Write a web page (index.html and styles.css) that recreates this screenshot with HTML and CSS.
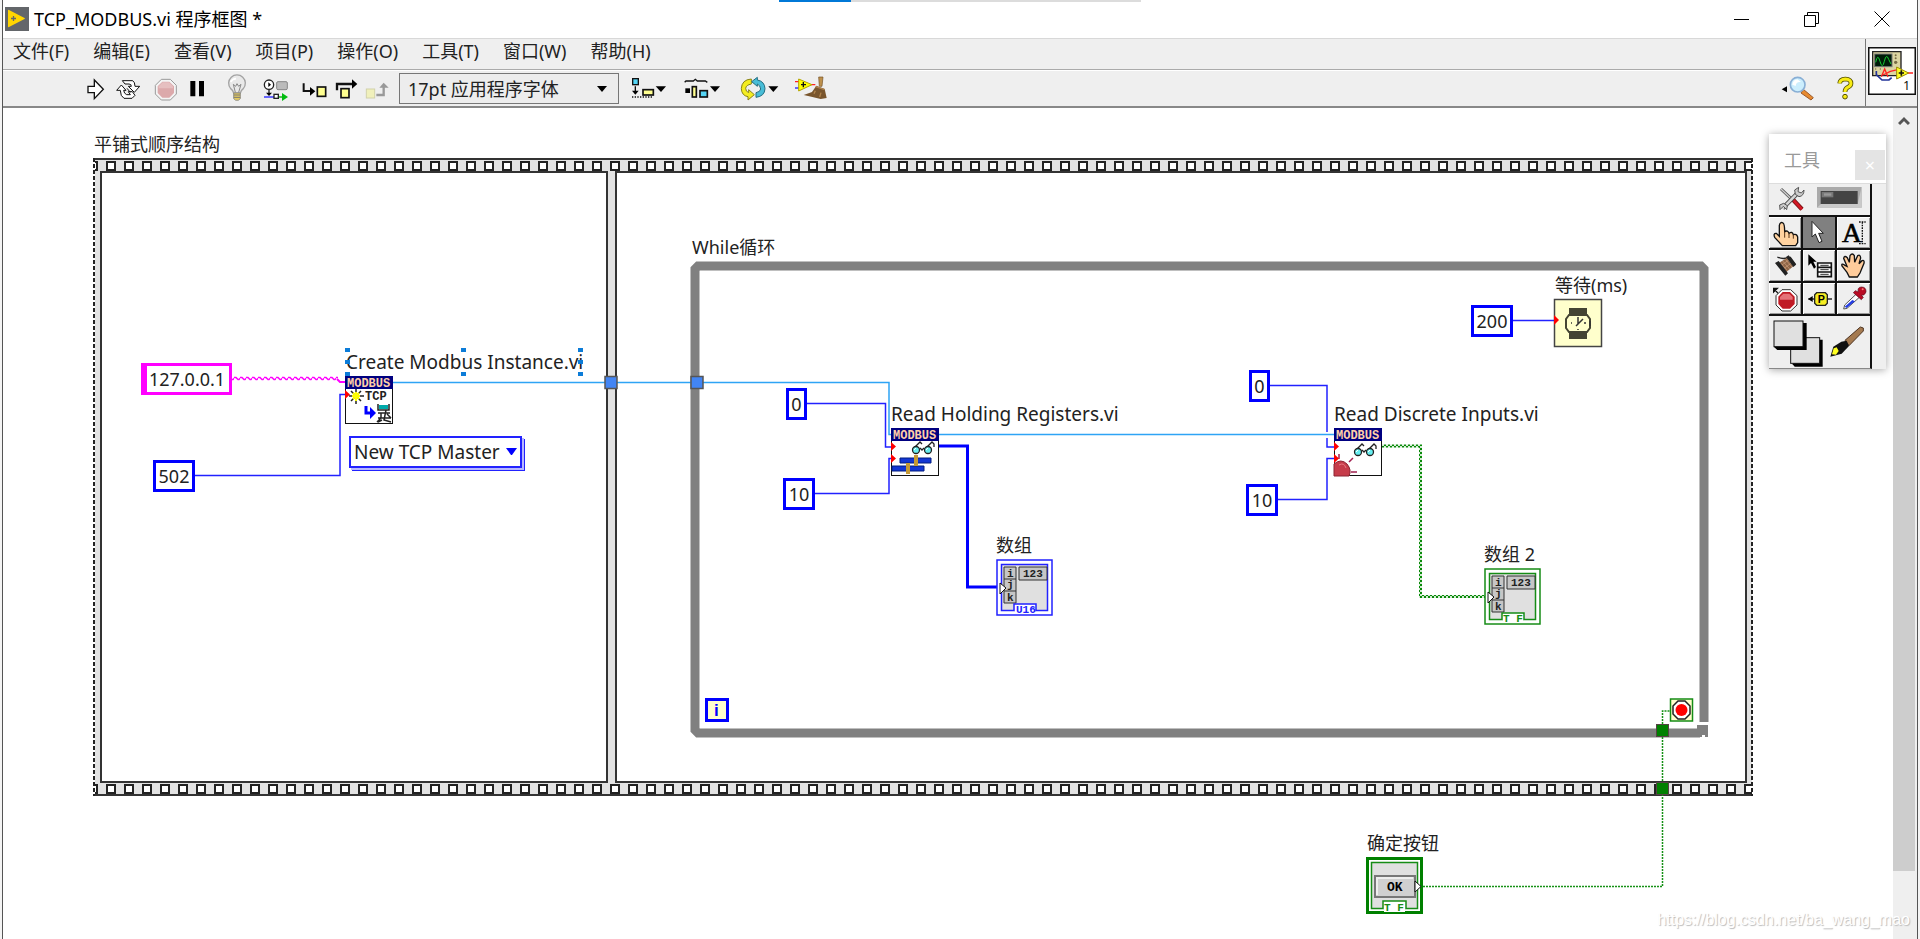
FILE: index.html
```html
<!DOCTYPE html>
<html lang="zh-CN">
<head>
<meta charset="utf-8">
<title>TCP_MODBUS.vi 程序框图 *</title>
<link rel="stylesheet" href="styles.css">
</head>
<body>
<div class="progress"><div class="progress-done"></div></div>
<div class="window">
  <header class="titlebar">
    <svg class="app-icon" viewBox="0 0 24 24"><rect width="24" height="24" fill="#63666a"/><path d="M3 3.500Q3 2.500 4 3L19.500 11Q20.500 11.500 19.500 12L4 20Q3 20.500 3 19.500Z" fill="#ffd500"/><path d="M6 11.500H11M8.500 9V14" stroke="#63666a" stroke-width="1.300"/></svg>
    <h1 class="title">TCP_MODBUS.vi 程序框图 *</h1>
    <div class="window-controls">
      <button class="winbtn" aria-label="最小化"><svg viewBox="0 0 16 16"><path d="M0 8.500H15"/></svg></button>
      <button class="winbtn" aria-label="还原"><svg viewBox="0 0 16 16"><path d="M.500 4.500H11.500V15.500H.500ZM3.500 4V1.500H14.500V12.500H12"/></svg></button>
      <button class="winbtn" aria-label="关闭"><svg viewBox="0 0 16 16"><path d="M.500 .500L15.500 15.500M15.500 .500L.500 15.500"/></svg></button>
    </div>
  </header>

  <div class="command-area">
    <div class="bars">
      <nav class="menubar">
        <button class="menu">文件(F)</button>
        <button class="menu">编辑(E)</button>
        <button class="menu">查看(V)</button>
        <button class="menu">项目(P)</button>
        <button class="menu">操作(O)</button>
        <button class="menu">工具(T)</button>
        <button class="menu">窗口(W)</button>
        <button class="menu">帮助(H)</button>
      </nav>
      <div class="toolbar">
        <div class="tool-group">
          <button class="tool" aria-label="运行"><svg width="22" height="26" viewBox="258 225 66 78"><path d="M264 256H283V237L310 265L283 293V275H264Z" fill="#fff" stroke="#111" stroke-width="4"/></svg></button>
          <button class="tool" aria-label="连续运行"><svg width="28" height="26" viewBox="345 225 84 78"><g fill="#fff" stroke="#111" stroke-width="3"><path d="M364 239H395Q402 243 402 256H416L400 274L382 256H391Q391 249 384 249H372Z"/><path d="M347 268L361 252L375 268H368Q369 278 377 281H388L382 272H394L402 283L393 292H369Q358 286 358 268Z"/><path d="M378 262L388 274"/></g></svg></button>
          <button class="tool" aria-label="中止执行"><svg width="28" height="26" viewBox="456 225 84 78"><path d="M484 235H511L529 253V279L511 297H484L466 279V253Z" fill="#f4f4f4" stroke="#999" stroke-width="3"/><path d="M487 242H508L522 256V276L508 290H487L473 276V256Z" fill="#dca9ab"/><path d="M476 262V256L488 244H507L519 256V262Z" fill="#e6bfc0"/></svg></button>
          <button class="tool" aria-label="暂停"><svg width="26" height="26" viewBox="564 225 78 78"><path d="M571 240H586V286H571ZM597 240H612V286H597Z"/></svg></button>
        </div>
        <button class="tool" aria-label="高亮显示执行过程"><svg width="24" height="26" viewBox="678 225 72 78"><path d="M701 276Q699 268 692 263A25 25 0 1 1 730 263Q723 268 721 276Z" fill="#e9e9e9" stroke="#a3a3a3" stroke-width="4"/><path d="M706 274L700 250L707 256L711 248L716 256L723 250L716 274" fill="none" stroke="#888" stroke-width="3"/><path d="M692 243Q697 234 708 233" stroke="#fff" stroke-width="5" fill="none"/><path d="M701 276H721V293L715 298H707L701 293Z" fill="#e2ca62" stroke="#777" stroke-width="2"/><path d="M701 282H721M701 289H721" stroke="#777" stroke-width="3"/></svg></button>
        <button class="tool" aria-label="保存连线值"><svg width="28" height="26" viewBox="786 225 84 78"><circle cx="807" cy="251" r="14" fill="#fff" stroke="#222" stroke-width="4"/><path d="M805 244V258L813 251Z"/><path d="M807 266V279" stroke="#222" stroke-width="4"/><path d="M798 275H816L807 285Z"/><rect x="830" y="242" width="32" height="24" rx="4" fill="#bbb" stroke="#888" stroke-width="3"/><path d="M792 288H822" stroke="#22f" stroke-width="4"/><path d="M836 288H848" stroke="#0a0" stroke-width="4"/><rect x="822" y="280" width="13" height="12" fill="#fff" stroke="#222" stroke-width="4"/><path d="M846 276L864 288L846 300Z" fill="#00bc10"/></svg></button>
        <div class="tool-group">
          <button class="tool" aria-label="单步步入"><svg width="26" height="26" viewBox="906 225 78 78"><path d="M911 247V270H936" fill="none" stroke="#111" stroke-width="6"/><path d="M930 258L946 271L930 284Z"/><rect x="952" y="258" width="25" height="28" fill="#ffff90" stroke="#111" stroke-width="5"/></svg></button>
          <button class="tool" aria-label="单步步过"><svg width="22" height="26" viewBox="1008 225 66 78"><path d="M1011 268V249H1060" fill="none" stroke="#111" stroke-width="7"/><path d="M1056 235L1072 249L1056 263Z"/><rect x="1023" y="263" width="24" height="27" fill="#ffff90" stroke="#111" stroke-width="5"/></svg></button>
          <button class="tool" aria-label="单步步出"><svg width="21" height="26" viewBox="1098 225 63 78"><rect x="1099" y="264" width="25" height="27" fill="#f0f0bb" stroke="#d2d2aa" stroke-width="3"/><path d="M1129 282H1151V256" fill="none" stroke="#999" stroke-width="7"/><path d="M1138 260L1151 245L1166 260Z" fill="#999"/></svg></button>
        </div>
        <div class="font-picker">
          <select class="font-select" aria-label="文本设置"><option>17pt 应用程序字体</option></select>
          <svg class="font-caret" viewBox="0 0 10 6"><path d="M0 0H10L5 6Z"/></svg>
        </div>
        <div class="tool-group tool-group-wide">
          <button class="tool" aria-label="对齐对象"><svg width="35" height="26" viewBox="693 225 105 78"><rect x="698" y="233" width="17" height="18" fill="#55d5f5" stroke="#111" stroke-width="4"/><path d="M706 256V272" stroke="#111" stroke-width="4"/><path d="M696 269H716L706 281Z"/><path d="M696 288H760" stroke="#111" stroke-width="4" stroke-dasharray="4 4"/><rect x="729" y="266" width="31" height="16" fill="#ffff90" stroke="#111" stroke-width="5"/><path d="M767 256H798L783 273Z"/></svg></button>
          <button class="tool" aria-label="分布对象"><svg width="39" height="26" viewBox="852 225 117 78"><path d="M854 244L858 240H880L886 235L892 240H916L922 244" fill="none" stroke="#111" stroke-width="4"/><rect x="856" y="262" width="14" height="14"/><rect x="877" y="257" width="12" height="31" fill="#ffff90" stroke="#111" stroke-width="5"/><rect x="900" y="269" width="22" height="19" fill="#55d5f5" stroke="#111" stroke-width="5"/><path d="M930 256H960L945 273Z"/></svg></button>
          <button class="tool" aria-label="重新排序"><svg width="36" height="26" viewBox="1023 225 108 78"><path d="M1054 234Q1025 236 1024 263Q1025 284 1044 287V297L1063 281L1046 266V275Q1037 272 1037 262Q1038 252 1054 249Z" fill="#f4ed21" stroke="#888319" stroke-width="3"/><path d="M1072 229L1055 242L1072 256V249Q1081 253 1082 264Q1081 273 1068 275V289Q1094 286 1095 263Q1094 241 1072 237Z" fill="#48bdd7" stroke="#246d80" stroke-width="3"/><path d="M1105 256H1135L1120 273Z"/></svg></button>
          <button class="tool" aria-label="整理程序框图"><svg width="34" height="26" viewBox="1185 225 102 78"><path d="M1185 242H1198M1230 251H1246" stroke="#f22" stroke-width="4"/><path d="M1185 261H1198" stroke="#22f" stroke-width="4"/><path d="M1196 234L1236 251L1196 270Z" fill="#ff0" stroke="#b3a500" stroke-width="3"/><path d="M1203 251H1218M1210 243V259" stroke="#111" stroke-width="4"/><path d="M1256 228H1269L1266 256H1258Z" fill="#be914c" stroke="#735026" stroke-width="2"/><path d="M1249 254L1274 264L1280 291L1262 294L1234 287L1211 282L1236 273Z" fill="#79552d"/><path d="M1247 257L1274 266M1242 278L1246 269M1259 288L1263 275" stroke="#b0824b" stroke-width="4"/></svg></button>
        </div>
        <div class="tool-group tool-group-end">
          <button class="tool" aria-label="搜索"><svg width="34" height="26" viewBox="243 225 102 78"><path d="M245 265L261 256V274Z"/><path d="M310 265L340 290L333 297L303 276Z" fill="#e78a2f" stroke="#99592c" stroke-width="3"/><circle cx="293" cy="251" r="22" fill="#cceefd" stroke="#89afd5" stroke-width="5"/><path d="M277 251Q278 237 292 235L303 243Q288 241 287 255Z" fill="#fff"/></svg></button>
          <button class="tool" aria-label="即时帮助"><svg width="20" height="26" viewBox="408 225 60 78"><g fill="none"><path d="M419 247Q420 235 436 234Q453 235 453 247Q453 255 443 259Q435 263 435 273" stroke="#555000" stroke-width="14"/><path d="M419 247Q420 235 436 234Q453 235 453 247Q453 255 443 259Q435 263 435 273" stroke="#f8ec16" stroke-width="9"/></g><circle cx="435" cy="287" r="7" fill="#f8ec16" stroke="#555000" stroke-width="3"/></svg></button>
        </div>
      </div>
    </div>
    <div class="vi-corner">
      <button class="vi-button" aria-label="VI图标"><svg width="48" height="48" viewBox="503 141 144 144"><rect x="505" y="143" width="140" height="140" fill="#fff" stroke="#111" stroke-width="5"/><path d="M517 155H602V210L596 227H517Z" fill="#dcd5a2" stroke="#222" stroke-width="4"/><rect x="523" y="162" width="52" height="38" fill="#001c08" stroke="#777" stroke-width="3"/><path d="M526 187Q532 158 539 184T552 184T565 178L572 192" fill="none" stroke="#17cd32" stroke-width="3"/><g fill="#776c45"><circle cx="586" cy="166" r="3"/><circle cx="586" cy="175" r="3"/><circle cx="586" cy="187" r="5"/><circle cx="526" cy="207" r="2"/><circle cx="540" cy="207" r="2"/></g><path d="M528 213V224L545 240H566L574 233" fill="none" stroke="#239" stroke-width="5"/><path d="M543 230L553 207L563 231M548 225L570 214L592 209M622 219H638" fill="none" stroke="#f22" stroke-width="4"/><path d="M589 201L625 219L589 237Z" fill="#ff2" stroke="#9b8b00" stroke-width="3"/><path d="M595 219H611M603 211V227" stroke="#111" stroke-width="5"/><text x="608" y="271" class="vi-number">1</text></svg></button>
    </div>
  </div>

  <main class="workspace">
    <section class="canvas" aria-label="程序框图">
      <svg class="wiring" width="1890" height="831" viewBox="3 108 1890 831">
        <defs>
          <pattern id="perf" x="106" y="0" width="18" height="850" patternUnits="userSpaceOnUse"><path d="M1 162H9V170H1ZM1 785H9V793H1Z" fill="#fff" stroke="#222" stroke-width="2"/></pattern>
          <pattern id="checker" width="4" height="4" patternUnits="userSpaceOnUse"><rect width="4" height="4" fill="#d4ecd4"/><path d="M0 0H2V2H0ZM2 2H4V4H2Z" fill="#0a8a0a"/></pattern>
          <pattern id="wave" x="0" y="376" width="6" height="5" patternUnits="userSpaceOnUse"><path d="M-1 1.500H2L4 3.500H5L7 1.500" fill="none" stroke="#f0f" stroke-width="1.500"/></pattern>
          <symbol id="array" viewBox="0 0 57 57" width="57" height="57">
            <rect x="1" y="1" width="55" height="55" fill="#fff" stroke="currentColor" stroke-width="1.500"/>
            <rect x="5.500" y="5.500" width="46" height="46" fill="#e0e0e0" stroke="currentColor" stroke-width="1.500"/>
            <path d="M8 8H20V44H8ZM8 20H20M8 32H20M23 8H51V21H23Z" fill="#c6c6c6" stroke="#333"/>
            <path d="M18 52V45H40V52" fill="#fff" stroke="currentColor" stroke-width="1.500"/><path d="M19 49H39V54H19Z" fill="#fff"/>
            <path d="M4 24L10 29L4 35Z" fill="#fff" stroke="#111"/>
            <g class="pixel-text" fill="#222"><text x="11" y="18">i</text><text x="11" y="29">j</text><text x="11" y="42">k</text><text x="27" y="18">123</text></g>
          </symbol>
          <symbol id="glasses" viewBox="0 0 26 16" width="26" height="16"><g fill="#66eef0" stroke="#222" stroke-width="1.300"><path d="M3 7L9 1L11 3M15 7L21 1L23 3V6" fill="none"/><circle cx="5" cy="9" r="3.500"/><circle cx="17" cy="9" r="3.500"/><path d="M9 7L11 9L13 7" fill="none"/></g><path d="M3 9L5 7M15 9L17 7" stroke="#fff"/></symbol>
        </defs>

        <!-- flat sequence structure -->
        <rect x="94" y="159" width="1659" height="637" fill="#e2e2e2"/>
        <path d="M94 161H1753V171H94ZM94 784H1753V794H94Z" fill="url(#perf)"/>
        <path d="M93 159H1753M93 795H1753" stroke="#333" stroke-width="2"/>
        <path d="M94 160V795M1753 160V795" stroke="#fff" stroke-width="2"/>
        <path d="M94 158V796M1752 158V796" stroke="#222" stroke-width="2" stroke-dasharray="4 2"/>
        <path d="M101 172H607V782H101ZM616 172H1746V782H616Z" fill="#fff" stroke="#333" stroke-width="2"/>

        <!-- while loop -->
        <path d="M1704 722V269L1701 266H698L695 269V730L698 733H1700" fill="none" stroke="#808080" stroke-width="9"/>
        <path d="M1697 725H1708V737H1705V735H1702V737H1697Z" fill="#808080"/>

        <!-- wires -->
        <rect x="231" y="376" width="107" height="5" fill="url(#wave)"/>
        <path d="M337 379L340 382H345" fill="none" stroke="#f0f" stroke-width="2"/>
        <path d="M393 382.500H889V434.500H1334" fill="none" stroke="#2ea4f5" stroke-width="1.500"/>
        <g fill="none" stroke="#22f" stroke-width="1.500">
          <path d="M195 475.500H340V394.500H345"/>
          <path d="M807 403.500H885.500V447H892"/>
          <path d="M814 493.500H889V458.500H892"/>
          <path d="M1270 385.500H1327V432M1327 438V447H1334"/>
          <path d="M1278 499.500H1327V458.500H1334"/>
          <path d="M1513 320.500H1555"/>
        </g>
        <path d="M939 446H967.500V587H997" fill="none" stroke="#00f" stroke-width="3"/>
        <path d="M1382 446H1420.500V596.500H1485" fill="none" stroke="url(#checker)" stroke-width="3"/>
        <path d="M1423 886.500H1662.500V711H1670" fill="none" stroke="#169116" stroke-width="1.500" stroke-dasharray="2 1"/>

        <!-- tunnels -->
        <g fill="#4285f4" stroke="#555" stroke-width="1.500"><rect x="605" y="376.500" width="12" height="12"/><rect x="691" y="376.500" width="12" height="12"/></g>
        <g fill="#008000" stroke="#544"><rect x="1656.500" y="724.500" width="12" height="12"/><rect x="1656.500" y="782.500" width="12" height="12"/></g>

        <!-- Create Modbus Instance -->
        <g transform="translate(345 376)">
          <rect x=".5" y=".5" width="47" height="47" fill="#fff" stroke="#111"/><path d="M0 0H48V13H0Z" fill="#000080"/>
          <text x="2" y="11" class="node-title">MODBUS</text>
          <path d="M11 13V28M4 20H19M6 15L16 25M16 15L6 25" stroke="#222" stroke-width="1.500"/><path d="M11 16V25M7 20H15M8 17L14 23M14 17L8 23" stroke="#ff0" stroke-width="2"/>
          <text x="20" y="24" class="tcp-text">TCP</text>
          <path d="M21 30V37H27" fill="none" stroke="#00f" stroke-width="3"/><path d="M25 31L31 37L25 43Z" fill="#00f"/>
          <path d="M34 29H43V33H34Z" fill="#0aa"/><path d="M33 28V34H44V28M33 37H45M36 37V42L32 46M41 34L39 44L46 46M33 42H46M33 46L37 44M42 38L46 42" fill="none" stroke="#222" stroke-width="1.500"/>
          <path d="M0 14L5 18.500L0 23Z" fill="#f00"/>
        </g>
        <!-- Read Holding Registers -->
        <g transform="translate(891 428)">
          <rect x=".5" y=".5" width="47" height="47" fill="#fff" stroke="#111"/><path d="M0 0H48V13H0Z" fill="#000080"/>
          <text x="2" y="11" class="node-title">MODBUS</text>
          <use href="#glasses" x="20" y="13"/>
          <path d="M9 30H40V35H9ZM1 38H33V43H1Z" fill="#1236d4" stroke="#001d80"/><path d="M23 27H27V38H23ZM15 35H19V46H15Z" fill="#c59a35"/>
          <path d="M0 14L5 18.500L0 23ZM0 26L5 30.500L0 35Z" fill="#f00"/>
        </g>
        <!-- Read Discrete Inputs -->
        <g transform="translate(1334 428)">
          <rect x=".5" y=".5" width="47" height="47" fill="#fff" stroke="#111"/><path d="M0 0H48V13H0Z" fill="#000080"/>
          <text x="2" y="11" class="node-title">MODBUS</text>
          <use href="#glasses" x="19" y="15"/>
          <path d="M0 36Q7 30 13 36Q18 42 15 48H0Z" fill="#c63c4a" stroke="#8c2432"/><path d="M5 37Q10 34 12 40" fill="none" stroke="#e87c84"/><path d="M15 34L19 30M17 44H23M5 26V31" stroke="#a02050" stroke-width="1.500"/>
          <path d="M0 14L5 18.500L0 23ZM0 26L5 30.500L0 35Z" fill="#f00"/>
        </g>

        <use href="#array" x="996" y="559" color="#2222ff"/>
        <text x="1016" y="613" class="pixel-text" fill="#22f">U16</text>
        <use href="#array" x="1484" y="568" color="#168c16"/>
        <text x="1503" y="622" class="tf-text">T F</text>

        <!-- wait (ms) -->
        <g transform="translate(1554 299)">
          <rect x=".5" y=".5" width="47" height="47" fill="#ffffcc" stroke="#444" stroke-width="1.500"/>
          <path d="M15 9H33V16H15ZM15 33H33V40H15Z" fill="#444433"/><path d="M15 16H33L36 20V29L33 33H15L12 29V20Z" fill="#ffffcc" stroke="#444433" stroke-width="2"/><path d="M24 18V25L29 20M24 25L22 27M17 24H18M30 24H32M24 30V31M36 22V27" fill="none" stroke="#333" stroke-width="1.500"/>
          <path d="M0 16L5 21L0 26Z" fill="#f00"/>
        </g>

        <!-- loop condition -->
        <rect x="1670.500" y="699" width="22" height="22" fill="#ffffcc" stroke="#168c16" stroke-width="1.500"/><path d="M1678 701H1685L1690 706V714L1685 719H1678L1673 714V706Z" fill="#fff" stroke="#222" stroke-width="1.500"/><circle cx="1681.500" cy="710" r="6" fill="#f00"/>
        <!-- loop index -->
        <rect x="706.500" y="699.500" width="21" height="21" fill="#ffffcc" stroke="#00f" stroke-width="3"/><text x="714" y="716" class="loop-index">i</text>

        <!-- OK button terminal -->
        <g transform="translate(1366 857)">
          <rect x="1.500" y="1.500" width="54" height="54" fill="#fff" stroke="#008000" stroke-width="3"/><rect x="5.500" y="5.500" width="46" height="46" fill="#e0e0e0" stroke="#168c16" stroke-width="1.500"/>
          <rect x="9" y="19" width="40" height="21" fill="#d0d0d0" stroke="#777" stroke-width="2"/><path d="M11 38V21H47" fill="none" stroke="#eee" stroke-width="2"/>
          <text x="21" y="34" class="ok-text">OK</text>
          <path d="M49 24L55 29.500L49 35Z" fill="#fff" stroke="#111"/>
          <path d="M17 52V44H40V52" fill="#fff" stroke="#168c16" stroke-width="1.500"/><path d="M18 49H39V55H18Z" fill="#fff"/><text x="18" y="54" class="tf-text">T F</text>
        </g>
      </svg>

      <span class="label label-sequence">平铺式顺序结构</span>
      <span class="label label-while">While循环</span>
      <span class="label label-vi label-create">Create Modbus Instance.vi</span>
      <span class="label label-vi label-holding">Read Holding Registers.vi</span>
      <span class="label label-vi label-discrete">Read Discrete Inputs.vi</span>
      <span class="label label-array">数组</span>
      <span class="label label-array2">数组 2</span>
      <span class="label label-wait">等待(ms)</span>
      <span class="label label-ok">确定按钮</span>

      <svg class="handles" width="238" height="28" viewBox="0 0 238 28"><path d="M0 0H5V4H0ZM116 0H121V4H116ZM233 0H238V4H233ZM0 12H5V16H0ZM233 12H238V16H233ZM0 24H5V28H0ZM116 24H121V28H116ZM233 24H238V28H233Z" fill="#0c7cd8"/></svg>

      <input class="constant string-constant const-ip" value="127.0.0.1" aria-label="IP address">
      <input class="constant const-port" value="502" aria-label="port">
      <input class="constant const-h-start" value="0" aria-label="Holding start">
      <input class="constant const-h-count" value="10" aria-label="Holding count">
      <input class="constant const-d-start" value="0" aria-label="Discrete start">
      <input class="constant const-d-count" value="10" aria-label="Discrete count">
      <input class="constant const-wait" value="200" aria-label="等待(ms)">
      <div class="ring">
        <select class="ring-select" aria-label="Instance type"><option>New TCP Master</option></select>
        <svg class="ring-caret" viewBox="0 0 11 7"><path d="M0 0H11L6 7H5Z" fill="#00f"/></svg>
      </div>
    </section>

    <div class="scrollbar">
      <button class="scroll-up" aria-label="向上滚动"><svg width="12" height="10" viewBox="0 0 12 10"><path d="M1 8L6 3L11 8" fill="none" stroke="#555" stroke-width="3"/></svg></button>
      <div class="scroll-thumb"></div>
    </div>

    <aside class="palette">
      <header class="palette-head"><span class="palette-title">工具</span><button class="palette-close" aria-label="关闭工具">×</button></header>
      <div class="palette-body">
        <button class="auto-tool" aria-label="自动选择工具"><svg width="100" height="31" viewBox="207 552 300 93"><g fill="none"><path d="M243 567L280 602" stroke="#555" stroke-width="9"/><path d="M243 567L280 602" stroke="#d0d0d0" stroke-width="4"/><path d="M280 600L306 628" stroke="#711" stroke-width="13"/><path d="M280 600L306 628" stroke="#d21825" stroke-width="8"/><path d="M248 625L294 578" stroke="#444" stroke-width="13"/><path d="M248 625L294 578" stroke="#d6d6d6" stroke-width="8"/></g><path d="M286 583L284 570L296 562L294 575L304 579L312 570Q312 588 297 590ZM240 629L239 615L251 610L262 617L260 629L250 619Z" fill="#ccc" stroke="#555" stroke-width="3"/><rect x="351" y="561" width="134" height="62" fill="#aaa"/><path d="M351 623L363 612H473L485 561V623Z" fill="#c9c9c9"/><path d="M362 573H473V612H362Z" fill="#444"/><path d="M365 576H400V592H365Z" fill="#777"/><path d="M372 580H394V587H372Z" fill="#999"/></svg></button>
        <button class="palette-tool" aria-label="操作值"><svg viewBox="207 651 93 93"><path d="M238 709V676Q241 664 249 669Q254 672 254 695Q263 689 267 700Q277 693 280 704Q290 700 293 711V728L287 737H247L224 712Q219 699 229 700Z" fill="#ffd2a0" stroke="#111" stroke-width="4"/><path d="M254 695V713M267 700V714M280 704V716" stroke="#5a3517" stroke-width="3"/></svg></button>
        <button class="palette-tool palette-tool-active" aria-label="定位"><svg viewBox="309 651 93 93"><path d="M336 664V711L346 702L357 728L366 724L356 700H370Z" fill="#fff" stroke="#222" stroke-width="3"/></svg></button>
        <button class="palette-tool" aria-label="编辑文本"><svg viewBox="412 651 93 93"><text x="427" y="727" class="edit-glyph">A</text><path d="M478 666H498M488 666V731M478 731H498" fill="none" stroke="#111" stroke-width="4" stroke-dasharray="5 3"/></svg></button>
        <button class="palette-tool" aria-label="进行连线"><svg viewBox="207 750 93 93"><path d="M232 771Q248 779 263 773M270 771L287 794" stroke="#222" stroke-width="4" fill="none"/><path d="M238 788L260 774L280 799L259 816Z" fill="#8e6547"/><path d="M241 788L262 812M248 783L269 807M256 778L276 801M243 797L266 780M251 806L274 789" stroke="#d0a17e" stroke-width="2"/><path d="M225 789L236 783L264 820L256 827ZM258 771L266 766L288 794L280 801Z" fill="#222"/></svg></button>
        <button class="palette-tool" aria-label="对象快捷菜单"><svg viewBox="309 750 93 93"><path d="M325 763V797L333 789L342 806L348 801L340 785H350Z"/><path d="M353 789H394V830H353ZM353 802H394M353 816H394" fill="#fff" stroke="#111" stroke-width="5"/><path d="M361 796H386M361 809H386M361 823H386" stroke="#333" stroke-width="3"/></svg></button>
        <button class="palette-tool" aria-label="滚动窗口"><svg viewBox="412 750 93 93"><path d="M442 817L427 798Q424 788 436 796L442 799L432 775Q434 765 443 773L449 787L451 767Q458 757 464 767L465 787L474 767Q482 762 483 774L478 791L487 782Q495 779 493 790L481 819L473 831H449Z" fill="#ffcc9b" stroke="#111" stroke-width="4"/></svg></button>
        <button class="palette-tool" aria-label="设置断点"><svg viewBox="207 849 93 93"><path d="M221 876V865H232ZM224 868L234 880" stroke="#111" stroke-width="4"/><path d="M246 869H272L291 887V915L272 933H246L228 915V887Z" fill="#fff" stroke="#333" stroke-width="3"/><path d="M248 876H270L284 890V912L270 926H248L235 912V890Z" fill="#c01a24"/><path d="M240 899V891L250 881H268L278 891V899Z" fill="#e57278"/></svg></button>
        <button class="palette-tool" aria-label="探针数据"><svg viewBox="309 849 93 93"><path d="M325 897H396" stroke="#111" stroke-width="4"/><path d="M324 897L338 888V906Z"/><path d="M350 878H376L382 884V910L376 916H350L344 910V884Z" fill="#f6ed22" stroke="#222" stroke-width="4"/><text x="353" y="909" class="probe-glyph">P</text></svg></button>
        <button class="palette-tool" aria-label="获取颜色"><svg viewBox="412 849 93 93"><path d="M432 927L435 915L470 882L479 892L442 925Z" fill="#fff" stroke="#555" stroke-width="3"/><path d="M435 920L458 900L466 904L441 924Z" fill="#253ee2"/><path d="M461 878L467 872L476 876Q472 862 485 861Q500 861 499 876Q495 887 485 886L491 892L485 899Z" fill="#b90c24" stroke="#5d0b1d" stroke-width="2"/><circle cx="489" cy="868" r="3" fill="#f77"/></svg></button>
        <button class="color-tool" aria-label="设置颜色"><svg width="100" height="51" viewBox="207 948 300 153"><path d="M278 1016H368V1097H284L278 1090Z"/><rect x="272" y="1010" width="87" height="77" fill="#e0e0e0" stroke="#111" stroke-width="3"/><path d="M228 966H320V1047H232L222 1038Z"/><rect x="222" y="960" width="87" height="77" fill="#e0e0e0" stroke="#111" stroke-width="3"/><path d="M435 1018L481 978L490 981V990L447 1034Z" fill="#a57a50" stroke="#4e3523" stroke-width="3"/><path d="M391 1067L400 1037L424 1022L440 1019L447 1035L425 1058Z" fill="#111"/><path d="M396 1060L401 1042L410 1039L416 1050L408 1061Z" fill="#ff2"/></svg></button>
      </div>
    </aside>

    <div class="watermark">https://blog.csdn.net/ba_wang_mao</div>
  </main>
</div>
</body>
</html>
```
FILE: styles.css
```css
* { box-sizing: border-box; }

body {
  margin: 0;
  height: 100vh;
  overflow: hidden;
  background: #f4f4f4;
  color: #222;
  font: 18px/24px "Noto Sans", "Noto Sans CJK SC", sans-serif;
}

button, input, select {
  margin: 0;
  padding: 0;
  border: 0;
  border-radius: 0;
  background: none;
  color: inherit;
  font: inherit;
}

button svg { display: block; }

.progress {
  position: absolute;
  top: 0;
  left: 779px;
  width: 362px;
  height: 2px;
  background: #dcdcdc;
}
.progress-done { width: 20%; height: 2px; background: #0078d7; }

.window {
  display: flex;
  flex-direction: column;
  height: 100%;
  margin: 0 2px;
  border: solid #555;
  border-width: 0 1px;
  background: #fff;
}

/* title bar */
.titlebar {
  display: flex;
  align-items: center;
  gap: 5px;
  height: 38px;
  padding-left: 2px;
}
.app-icon { width: 24px; height: 24px; }
.title {
  margin: 0;
  color: #000;
  font: 400 18px/38px "Noto Sans", "Noto Sans CJK SC", sans-serif;
}
.window-controls { display: flex; margin-left: auto; }
.winbtn {
  display: flex;
  align-items: center;
  justify-content: center;
  width: 70px;
  height: 38px;
}
.winbtn svg { width: 16px; height: 16px; fill: none; stroke: #000; }

/* menus and toolbar */
.command-area {
  display: flex;
  height: 70px;
  border-top: 1px solid #d8d8d8;
  border-bottom: 2px solid #888;
  background: #efefef;
}
.bars { flex: 1; }
.menubar {
  display: flex;
  align-items: flex-start;
  gap: 24px;
  height: 31px;
  padding-left: 10px;
  border-bottom: 1px solid #aaa;
}
.menu { height: 24px; line-height: 24px; }
.toolbar {
  display: flex;
  align-items: center;
  gap: 12px;
  height: 36px;
  padding-left: 83px;
  border-top: 1px solid #fff;
}
.tool-group { display: flex; gap: 8px; }
.tool-group-wide { gap: 18px; }
.tool-group-end { gap: 21px; margin-left: auto; padding-right: 9px; }
.tool svg { overflow: visible; }
.font-picker { position: relative; width: 220px; }
.font-select {
  appearance: none;
  display: block;
  width: 100%;
  height: 31px;
  padding: 0 30px 0 8px;
  border: 1px solid #777;
  background: #ededed;
  line-height: 28px;
}
.font-caret { position: absolute; right: 12px; top: 13px; width: 10px; height: 6px; }
.vi-corner {
  width: 52px;
  padding: 8px 0 0 2px;
  border-left: 1px solid #777;
}
.vi-number { font: 38px "Open Sans", sans-serif; }

/* diagram */
.workspace { position: relative; display: flex; flex: 1; min-height: 0; overflow: hidden; }
.canvas { position: relative; flex: 1; overflow: hidden; }
.wiring { display: block; }

.node-title { fill: #ffcfa8; font: bold 12px "Liberation Mono", monospace; }
.pixel-text { font: bold 11px "Liberation Mono", monospace; }
.tcp-text { fill: #222; font: bold 12px "Liberation Mono", monospace; }
.tf-text { fill: #168c16; font: bold 11px "Liberation Mono", monospace; }
.ok-text { font: bold 13px "Liberation Mono", monospace; }
.loop-index { fill: #00f; font: bold 17px "Liberation Sans", sans-serif; }

.label { position: absolute; white-space: nowrap; }
.label-vi { font-size: 19px; }
.label-sequence { left: 91px; top: 24px; }
.label-while { left: 689px; top: 127px; }
.label-create { left: 343px; top: 242px; }
.label-holding { left: 888px; top: 294px; }
.label-discrete { left: 1331px; top: 294px; }
.label-array { left: 993px; top: 425px; }
.label-array2 { left: 1481px; top: 434px; }
.label-wait { left: 1552px; top: 165px; }
.label-ok { left: 1364px; top: 723px; }
.handles { position: absolute; left: 342px; top: 240px; }

.constant {
  position: absolute;
  width: 32px;
  height: 32px;
  border: 3px solid #00f;
  background: #fff;
  line-height: 26px;
  text-align: center;
}
.string-constant { padding-right: 2px; border-color: #f0f; border-left-width: 6px; }
.const-ip { left: 138px; top: 255px; width: 91px; }
.const-port { left: 150px; top: 352px; width: 42px; }
.const-h-start { left: 783px; top: 280px; width: 21px; }
.const-h-count { left: 780px; top: 370px; }
.const-d-start { left: 1246px; top: 262px; width: 21px; }
.const-d-count { left: 1243px; top: 376px; }
.const-wait { left: 1468px; top: 197px; width: 42px; }

.ring {
  position: absolute;
  left: 346px;
  top: 328px;
  width: 173px;
  border: 2px solid #22f;
  background: #fff;
  box-shadow: 2px 2px 0 #b8b8ff, 3px 3px 0 #22f;
}
.ring-select { appearance: none; display: block; width: 100%; height: 28px; padding-left: 3px; font-size: 19px; }
.ring-caret { position: absolute; right: 3px; top: 10px; width: 11px; height: 7px; }

/* scroll bar */
.scrollbar { width: 24px; padding-right: 2px; background: #efefef; }
.scroll-up { display: flex; justify-content: center; width: 100%; height: 159px; padding-top: 8px; }
.scroll-thumb { height: 604px; background: #cdcdcd; }

/* floating tools palette */
.palette {
  position: absolute;
  top: 26px;
  right: 31px;
  width: 117px;
  background: #efefef;
  box-shadow: 0 1px 8px rgba(0, 0, 0, .35);
}
.palette-head {
  display: flex;
  align-items: flex-end;
  justify-content: space-between;
  height: 50px;
  padding: 0 1px 3px 15px;
  border-bottom: 1px solid #ddd;
  background: #fff;
}
.palette-title { color: #999; line-height: 40px; }
.palette-close { width: 30px; height: 30px; background: #e4e4e4; color: #fff; }
.palette-body {
  display: grid;
  grid-template-columns: 34px 34px 33px;
  width: 103px;
  border-right: 2px solid #111;
  border-bottom: 1px solid #888;
}
.auto-tool, .color-tool { grid-column: 1 / -1; }
.auto-tool { height: 33px; border-bottom: 2px solid #111; }
.palette-tool {
  height: 33px;
  border: solid #111;
  border-width: 0 2px 2px 0;
  box-shadow: inset 1px 1px 0 #fff, inset -1px -1px 0 #999;
}
.palette-tool:nth-child(3n + 1) { border-right-width: 0; }
.palette-tool svg { width: 31px; height: 31px; }
.palette-tool-active { background: #808080; box-shadow: none; }
.color-tool { height: 52px; }
.edit-glyph { font: 82px "Liberation Serif", serif; stroke: #000; stroke-width: 2px; }
.probe-glyph { font: bold 32px "Liberation Sans", sans-serif; }

.watermark {
  position: absolute;
  right: 7px;
  bottom: 7px;
  color: #fff;
  font: 16px/24px "Liberation Sans", sans-serif;
  text-shadow: 1px 1px 1px #bbb;
}
```
